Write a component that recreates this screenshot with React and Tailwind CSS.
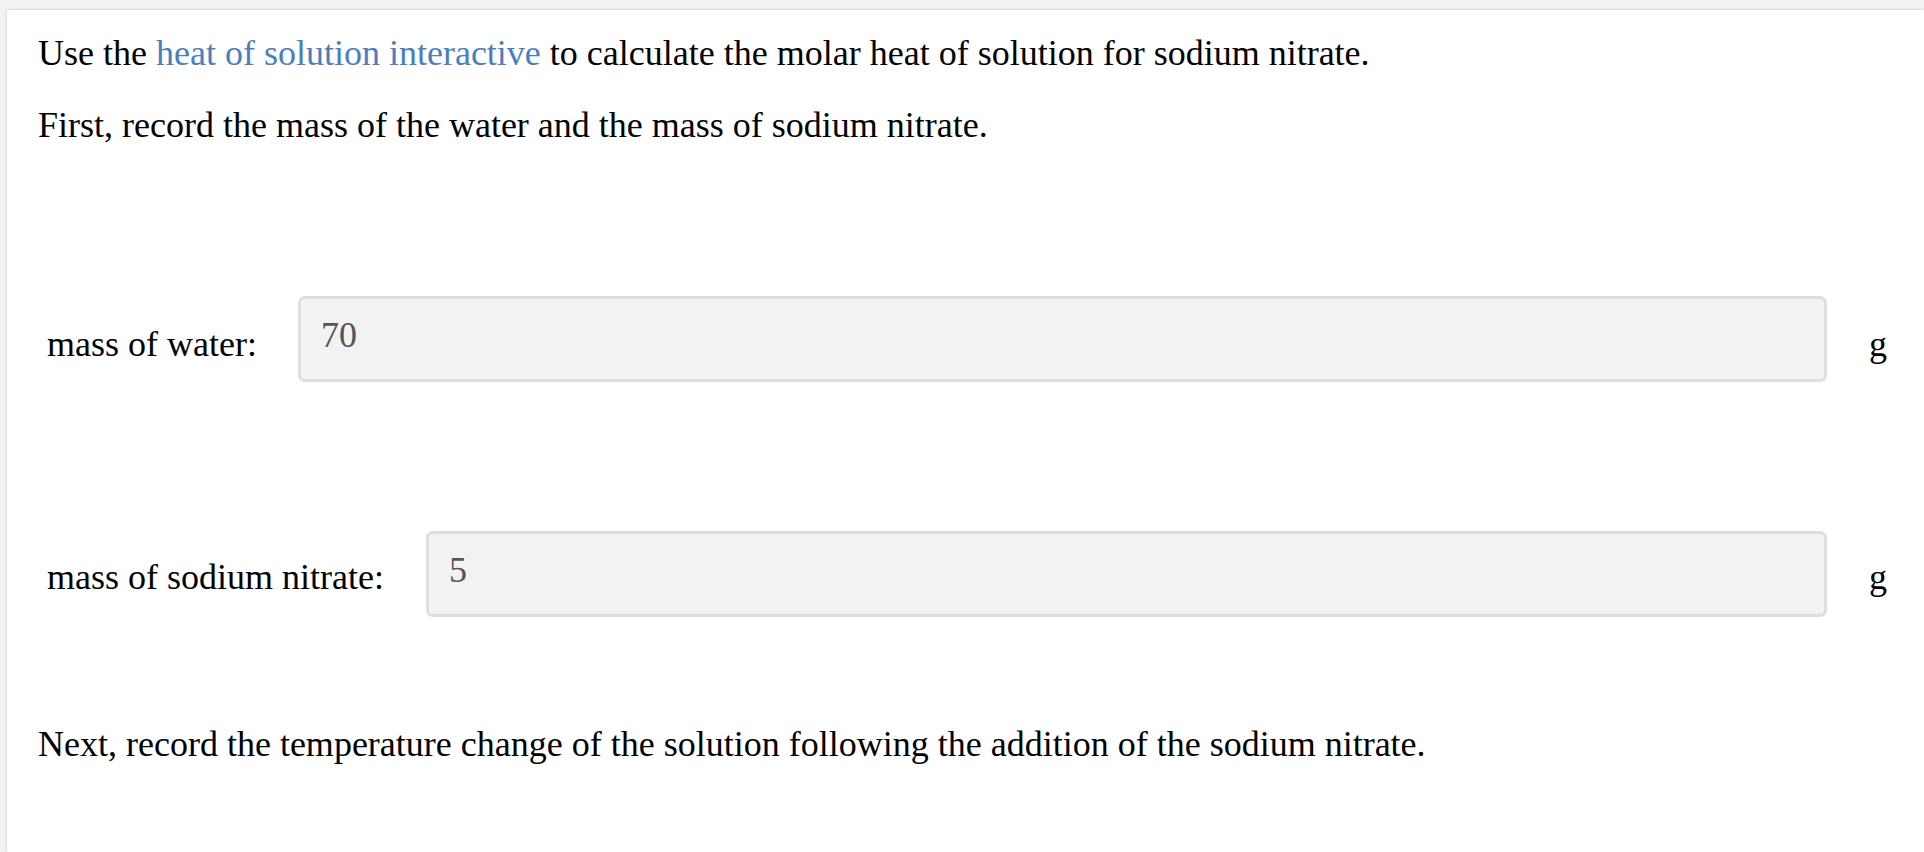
export default function App() {
  const font = { fontFamily: '"Liberation Serif", "Times New Roman", serif' };
  return (
    <div className="min-h-[852px] w-full overflow-hidden bg-[#f2f2f2] pl-[7px] pt-[10px]" style={font}>
      <div className="min-h-[842px] bg-white pl-[31px] pt-[23px] text-[36px] leading-[40px] text-black shadow-[0_0_3px_rgba(0,0,0,0.18)]">
        <p>
          Use the <span className="text-[#4a7fbc]">heat of solution interactive</span> to calculate the molar heat of solution for sodium nitrate.
        </p>
        <p className="mt-[32px]">First, record the mass of the water and the mass of sodium nitrate.</p>

        <div className="mt-[151px] flex items-start">
          <span className="ml-[9px] mt-[28px] whitespace-nowrap">mass of water:</span>
          <input
            readOnly
            value="70"
            className="ml-[41px] h-[86px] min-w-0 flex-1 rounded-[7px] border-[3px] border-[#dedede] bg-[#f2f2f2] pb-[24px] pl-[20px] pt-[16px] text-[36px] leading-[40px] text-[#555555] outline-none"
            style={font}
          />
          <span className="ml-[42px] mr-[37px] mt-[28px]">g</span>
        </div>

        <div className="mt-[149px] flex items-start">
          <span className="ml-[9px] mt-[26px] whitespace-nowrap">mass of sodium nitrate:</span>
          <input
            readOnly
            value="5"
            className="ml-[42px] h-[86px] min-w-0 flex-1 rounded-[7px] border-[3px] border-[#dedede] bg-[#f2f2f2] pb-[24px] pl-[20px] pt-[16px] text-[36px] leading-[40px] text-[#555555] outline-none"
            style={font}
          />
          <span className="ml-[42px] mr-[37px] mt-[26px]">g</span>
        </div>

        <p className="mt-[107px]">Next, record the temperature change of the solution following the addition of the sodium nitrate.</p>
      </div>
    </div>
  );
}
